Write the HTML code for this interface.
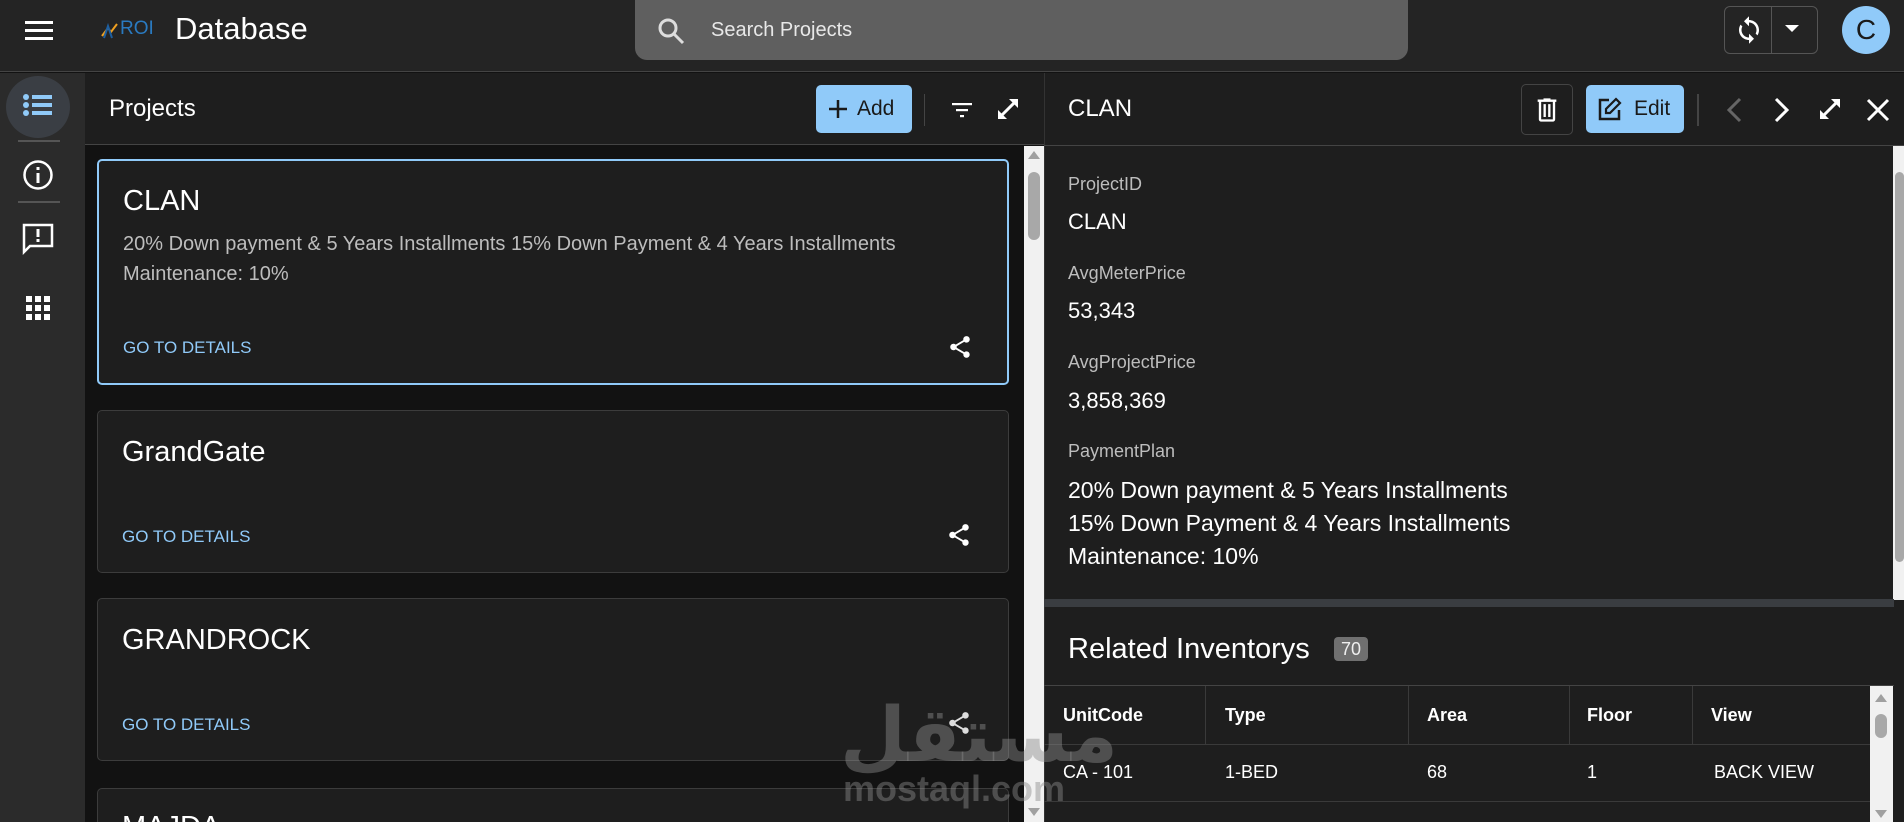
<!DOCTYPE html>
<html><head><meta charset="utf-8"><style>
*{box-sizing:border-box;margin:0;padding:0}
html{width:1904px;height:822px;overflow:hidden}
body{width:1904px;height:822px;overflow:hidden;background:#121212;font-family:"Liberation Sans",Roboto,sans-serif;color:#fff;position:relative}
.a{position:absolute}
svg{display:block}
.lbl{color:#bdbdbd;font-size:18px}
.val{color:#fff;font-size:22px}
.card{position:absolute;left:97px;width:912px;background:#1e1e1e;border:1px solid #3c3c3c;border-radius:5px;overflow:hidden}
.card .t{position:absolute;left:24px;font-size:29px;color:#fff}
.card .g{position:absolute;left:24px;font-size:17px;color:#90caf9}
.th{font-weight:bold;font-size:18px;color:#fff}
.td{font-size:18px;color:#fff}
</style></head><body>
<div class="a" style="left:0;top:0;width:1904px;height:72px;background:#242424;border-bottom:1px solid #444"></div>
<svg class="a" style="left:24px;top:18px" width="30" height="24" viewBox="0 0 30 24"><rect x="1" y="3" width="28" height="3" fill="#fff"/><rect x="1" y="11" width="28" height="3" fill="#fff"/><rect x="1" y="19" width="28" height="3" fill="#fff"/></svg>
<svg class="a" style="left:100px;top:20px" width="20" height="20" viewBox="0 0 20 20"><path d="M2 16 L8 8 L11 12 L17 4" stroke="#f0a020" stroke-width="2" fill="none"/><path d="M4 18 L8 6 L12 18" stroke="#1e5fa0" stroke-width="2" fill="none"/></svg>
<div class="a" style="left:120px;top:18px;font-size:19px;color:#2a7ac0">ROI</div>
<div class="a" style="left:175px;top:11px;font-size:31px;color:#fff">Database</div>
<div class="a" style="left:635px;top:0;width:773px;height:60px;background:#5f5f5f;border-radius:0 0 12px 12px"></div>
<svg class="a" style="left:656px;top:16px" width="30" height="30" viewBox="0 0 30 30"><circle cx="12" cy="12" r="8" stroke="#ddd" stroke-width="3" fill="none"/><path d="M18 18 L27 27" stroke="#ddd" stroke-width="3"/></svg>
<div class="a" style="left:711px;top:19px;font-size:20px;color:#e8e8e8">Search Projects</div>
<div class="a" style="left:1724px;top:6px;width:94px;height:48px;border:1px solid #555;border-radius:6px"></div>
<div class="a" style="left:1771px;top:6px;width:1px;height:48px;background:#555"></div>
<svg class="a" style="left:1734px;top:15px" width="30" height="30" viewBox="0 0 24 24"><path fill="#fff" d="M12 4V1L8 5l4 4V6c3.3 0 6 2.7 6 6 0 1-.25 2-.7 2.8l1.46 1.46C19.54 15.03 20 13.57 20 12c0-4.42-3.58-8-8-8zm0 14c-3.3 0-6-2.7-6-6 0-1 .25-2 .7-2.8L5.24 7.740C4.46 8.97 4 10.43 4 12c0 4.42 3.58 8 8 8v3l4-4-4-4v3z"/></svg>
<svg class="a" style="left:1785px;top:25px" width="14" height="8"><path d="M0 0 L14 0 L7 7Z" fill="#fff"/></svg>
<div class="a" style="left:1842px;top:6px;width:48px;height:48px;border-radius:50%;background:#90caf9;color:#1a1a1a;font-size:28px;text-align:center;line-height:48px">C</div>
<div class="a" style="left:0;top:73px;width:85px;height:749px;background:#2b2b2b"></div>
<div class="a" style="left:6px;top:76px;width:64px;height:62px;border-radius:50%;background:#3a3e44"></div>
<svg class="a" style="left:22px;top:93px" width="32" height="28" viewBox="0 0 32 28"><circle cx="4" cy="4" r="3" fill="#90caf9"/><circle cx="4" cy="12" r="3" fill="#90caf9"/><circle cx="4" cy="20" r="3" fill="#90caf9"/><rect x="10" y="2" width="20" height="4" fill="#90caf9"/><rect x="10" y="10" width="20" height="4" fill="#90caf9"/><rect x="10" y="18" width="20" height="4" fill="#90caf9"/></svg>
<div class="a" style="left:18px;top:140px;width:42px;height:2px;background:#555"></div>
<svg class="a" style="left:22px;top:159px" width="32" height="32" viewBox="0 0 32 32"><circle cx="16" cy="16" r="13.5" stroke="#fff" stroke-width="2.5" fill="none"/><rect x="14.5" y="14" width="3" height="10" fill="#fff"/><rect x="14.5" y="8" width="3" height="3" fill="#fff"/></svg>
<svg class="a" style="left:22px;top:223px" width="32" height="32" viewBox="0 0 32 32"><path d="M2 2 H30 V23 H8 L2 29Z" stroke="#fff" stroke-width="2.5" fill="none"/><rect x="14.5" y="6" width="3" height="8" fill="#fff"/><rect x="14.5" y="16" width="3" height="3" fill="#fff"/></svg>
<div class="a" style="left:18px;top:201px;width:42px;height:2px;background:#555"></div>
<svg class="a" style="left:26px;top:296px" width="24" height="24" viewBox="0 0 24 24" fill="#fff"><rect x="0" y="0" width="6" height="6"/><rect x="9" y="0" width="6" height="6"/><rect x="18" y="0" width="6" height="6"/><rect x="0" y="9" width="6" height="6"/><rect x="9" y="9" width="6" height="6"/><rect x="18" y="9" width="6" height="6"/><rect x="0" y="18" width="6" height="6"/><rect x="9" y="18" width="6" height="6"/><rect x="18" y="18" width="6" height="6"/></svg>
<div class="a" style="left:85px;top:73px;width:959px;height:72px;background:#1e1e1e;border-bottom:1px solid #444"></div>
<div class="a" style="left:109px;top:95px;font-size:24px;color:#fff">Projects</div>
<div class="a" style="left:816px;top:85px;width:96px;height:48px;background:#90caf9;border-radius:5px"></div>
<svg class="a" style="left:828px;top:99px" width="20" height="20"><path d="M10 1V19M1 10H19" stroke="#1a1a1a" stroke-width="2.5"/></svg>
<div class="a" style="left:857px;top:97px;font-size:21px;color:#1a1a1a">Add</div>
<div class="a" style="left:924px;top:94px;width:1px;height:32px;background:#444"></div>
<svg class="a" style="left:950px;top:98px" width="24" height="24" viewBox="0 0 24 24"><rect x="2" y="5" width="20" height="2.2" fill="#fff"/><rect x="6" y="11" width="12" height="2.2" fill="#fff"/><rect x="10" y="17" width="4" height="2.2" fill="#fff"/></svg>
<svg class="a" style="left:995px;top:96px" width="26" height="26" viewBox="0 0 26 26"><path d="M5 21 L21 5" stroke="#fff" stroke-width="3"/><path d="M14 3 H23 V12Z" fill="#fff"/><path d="M3 14 V23 H12Z" fill="#fff"/></svg>
<div class="a" style="left:1024px;top:146px;width:20px;height:676px;background:#f1f1f1"></div>
<div class="a" style="left:1028px;top:172px;width:12px;height:68px;background:#a8a8a8;border-radius:6px"></div>
<svg class="a" style="left:1028px;top:151px" width="12" height="8"><path d="M0 8L6 0L12 8Z" fill="#a0a0a0"/></svg>
<svg class="a" style="left:1028px;top:808px" width="12" height="8"><path d="M0 0L6 8L12 0Z" fill="#a0a0a0"/></svg>
<div class="card" style="top:159px;height:226px;border:2px solid #90caf9">
<div class="t" style="top:24px">CLAN</div>
<div class="a" style="left:24px;top:68px;font-size:20px;color:#bdbdbd;line-height:30px;white-space:nowrap">20% Down payment &amp; 5 Years Installments 15% Down Payment &amp; 4 Years Installments<br>Maintenance: 10%</div>
<div class="g" style="top:177px">GO TO DETAILS</div>
<svg class="a" style="left:848px;top:172px" width="26" height="28" viewBox="0 0 24 24"><path fill="#fff" d="M18 16.08c-.76 0-1.44.3-1.96.77L8.91 12.7c.05-.23.09-.46.09-.7s-.04-.47-.09-.7l7.05-4.11c.54.5 1.25.81 2.04.81 1.66 0 3-1.34 3-3s-1.34-3-3-3-3 1.34-3 3c0 .24.04.47.09.7L8.04 9.81C7.5 9.31 6.79 9 6 9c-1.66 0-3 1.34-3 3s1.34 3 3 3c.79 0 1.5-.31 2.04-.81l7.12 4.16c-.05.21-.08.43-.08.65 0 1.61 1.31 2.92 2.92 2.92s2.92-1.31 2.92-2.92-1.31-2.92-2.92-2.92z"/></svg>
</div>
<div class="card" style="top:410px;height:163px">
<div class="t" style="top:25px">GrandGate</div>
<div class="g" style="top:116px">GO TO DETAILS</div>
<svg class="a" style="left:848px;top:110px" width="26" height="28" viewBox="0 0 24 24"><path fill="#fff" d="M18 16.08c-.76 0-1.44.3-1.96.77L8.91 12.7c.05-.23.09-.46.09-.7s-.04-.47-.09-.7l7.05-4.11c.54.5 1.25.81 2.04.81 1.66 0 3-1.34 3-3s-1.34-3-3-3-3 1.34-3 3c0 .24.04.47.09.7L8.04 9.81C7.5 9.31 6.79 9 6 9c-1.66 0-3 1.34-3 3s1.34 3 3 3c.79 0 1.5-.31 2.04-.81l7.12 4.16c-.05.21-.08.43-.08.65 0 1.61 1.31 2.92 2.92 2.92s2.92-1.31 2.92-2.92-1.31-2.92-2.92-2.92z"/></svg>
</div>
<div class="card" style="top:598px;height:163px">
<div class="t" style="top:25px">GRANDROCK</div>
<div class="g" style="top:116px">GO TO DETAILS</div>
<svg class="a" style="left:848px;top:110px" width="26" height="28" viewBox="0 0 24 24"><path fill="#ddd" d="M18 16.08c-.76 0-1.44.3-1.96.77L8.91 12.7c.05-.23.09-.46.09-.7s-.04-.47-.09-.7l7.05-4.11c.54.5 1.25.81 2.04.81 1.66 0 3-1.34 3-3s-1.34-3-3-3-3 1.34-3 3c0 .24.04.47.09.7L8.04 9.81C7.5 9.31 6.79 9 6 9c-1.66 0-3 1.34-3 3s1.34 3 3 3c.79 0 1.5-.31 2.04-.81l7.12 4.16c-.05.21-.08.43-.08.65 0 1.61 1.31 2.92 2.92 2.92s2.92-1.31 2.92-2.92-1.31-2.92-2.92-2.92z"/></svg>
</div>
<div class="card" style="top:788px;height:34px;border-bottom:none;border-radius:5px 5px 0 0">
<div class="t" style="top:22px">MAJDA</div>
</div>
<div class="a" style="left:1044px;top:73px;width:860px;height:749px;background:#1e1e1e;border-left:1px solid #333"></div>
<div class="a" style="left:1044px;top:145px;width:860px;height:1px;background:#444"></div>
<div class="a" style="left:1068px;top:95px;font-size:24px">CLAN</div>
<div class="a" style="left:1521px;top:84px;width:52px;height:51px;border:1px solid #444;border-radius:5px"></div>
<svg class="a" style="left:1533px;top:96px" width="28" height="28" viewBox="0 0 24 24"><path fill="#fff" d="M15 3V2H9v1H4v2h1v15a2 2 0 002 2h10a2 2 0 002-2V5h1V3h-5zM7 5h10v15H7V5zm2 2h2v11H9V7zm4 0h2v11h-2V7z"/></svg>
<div class="a" style="left:1586px;top:85px;width:98px;height:48px;background:#90caf9;border-radius:5px"></div>
<svg class="a" style="left:1597px;top:96px" width="26" height="26" viewBox="0 0 26 26"><path d="M12 4H3v19h19v-9" stroke="#1a1a1a" stroke-width="2.5" fill="none"/><path d="M19 3l4 4-10 10h-4v-4z" stroke="#1a1a1a" stroke-width="2.2" fill="none"/></svg>
<div class="a" style="left:1634px;top:97px;font-size:21px;color:#1a1a1a">Edit</div>
<div class="a" style="left:1697px;top:94px;width:2px;height:32px;background:#444"></div>
<svg class="a" style="left:1724px;top:97px" width="20" height="26"><path d="M16 2L5 13L16 24" stroke="#666" stroke-width="3" fill="none"/></svg>
<svg class="a" style="left:1772px;top:97px" width="20" height="26"><path d="M4 2L15 13L4 24" stroke="#fff" stroke-width="3" fill="none"/></svg>
<svg class="a" style="left:1817px;top:96px" width="26" height="26" viewBox="0 0 26 26"><path d="M5 21 L21 5" stroke="#fff" stroke-width="3"/><path d="M14 3 H23 V12Z" fill="#fff"/><path d="M3 14 V23 H12Z" fill="#fff"/></svg>
<svg class="a" style="left:1866px;top:98px" width="24" height="24"><path d="M2 2L22 22M22 2L2 22" stroke="#fff" stroke-width="3"/></svg>
<div class="a" style="left:1893px;top:146px;width:11px;height:454px;background:#f1f1f1"></div>
<div class="a" style="left:1895px;top:172px;width:9px;height:390px;background:#a8a8a8;border-radius:5px"></div>
<div class="a lbl" style="left:1068px;top:174px">ProjectID</div>
<div class="a val" style="left:1068px;top:209px">CLAN</div>
<div class="a lbl" style="left:1068px;top:263px">AvgMeterPrice</div>
<div class="a val" style="left:1068px;top:298px">53,343</div>
<div class="a lbl" style="left:1068px;top:352px">AvgProjectPrice</div>
<div class="a val" style="left:1068px;top:388px">3,858,369</div>
<div class="a lbl" style="left:1068px;top:441px">PaymentPlan</div>
<div class="a val" style="left:1068px;top:474px;line-height:33px;font-size:23px">20% Down payment &amp; 5 Years Installments<br>15% Down Payment &amp; 4 Years Installments<br>Maintenance: 10%</div>
<div class="a" style="left:1044px;top:599px;width:850px;height:8px;background:#3a3d41"></div>
<div class="a" style="left:1068px;top:633px;font-size:29px">Related Inventorys</div>
<div class="a" style="left:1334px;top:637px;width:34px;height:24px;background:#707070;border-radius:4px;font-size:18px;text-align:center;line-height:24px;color:#eee">70</div>
<div class="a" style="left:1044px;top:685px;width:850px;height:1px;background:#444"></div>
<div class="a" style="left:1044px;top:744px;width:826px;height:1px;background:#3a3a3a"></div>
<div class="a" style="left:1044px;top:801px;width:826px;height:1px;background:#3a3a3a"></div>
<div class="a" style="left:1205px;top:686px;width:1px;height:58px;background:#3a3a3a"></div>
<div class="a" style="left:1408px;top:686px;width:1px;height:58px;background:#3a3a3a"></div>
<div class="a" style="left:1569px;top:686px;width:1px;height:58px;background:#3a3a3a"></div>
<div class="a" style="left:1692px;top:686px;width:1px;height:58px;background:#3a3a3a"></div>
<div class="a th" style="left:1063px;top:705px">UnitCode</div>
<div class="a th" style="left:1225px;top:705px">Type</div>
<div class="a th" style="left:1427px;top:705px">Area</div>
<div class="a th" style="left:1587px;top:705px">Floor</div>
<div class="a th" style="left:1711px;top:705px">View</div>
<div class="a td" style="left:1063px;top:762px">CA - 101</div>
<div class="a td" style="left:1225px;top:762px">1-BED</div>
<div class="a td" style="left:1427px;top:762px">68</div>
<div class="a td" style="left:1587px;top:762px">1</div>
<div class="a td" style="left:1714px;top:762px">BACK VIEW</div>
<div class="a" style="left:1870px;top:686px;width:23px;height:136px;background:#f1f1f1"></div>
<svg class="a" style="left:1875px;top:694px" width="12" height="8"><path d="M0 8L6 0L12 8Z" fill="#a0a0a0"/></svg>
<div class="a" style="left:1875px;top:714px;width:12px;height:24px;background:#a8a8a8;border-radius:6px"></div>
<svg class="a" style="left:1875px;top:810px" width="12" height="8"><path d="M0 0L6 8L12 0Z" fill="#a0a0a0"/></svg>
<div class="a" style="left:840px;top:690px;font-size:76px;font-weight:bold;color:rgba(140,140,140,0.45);font-family:'DejaVu Sans',sans-serif">مستقل</div>
<div class="a" style="left:843px;top:768px;font-size:36px;font-weight:bold;color:rgba(140,140,140,0.45)">mostaql.com</div>
</body></html>
